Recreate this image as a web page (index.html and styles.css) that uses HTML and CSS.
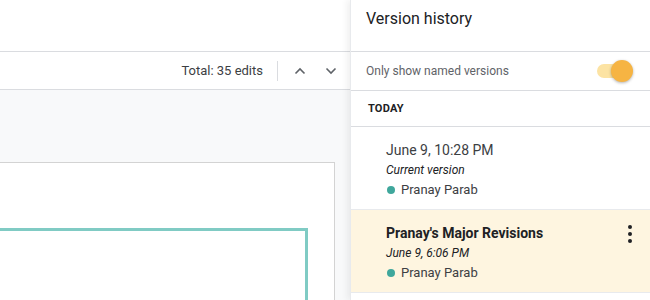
FILE: index.html
```html
<!DOCTYPE html>
<html lang="en">
<head>
    <meta charset="UTF-8">
    <title>Version history</title>
    <link rel="stylesheet" href="styles.css">
</head>
<body>
    <div class="editor">
        <div class="topbar"></div>
        <div class="toolbar">
            <span class="total">Total: 35 edits</span>
            <span class="sep"></span>
            <button class="nav" title="Previous edit">
                <svg width="12" height="8" viewBox="0 0 12 8"><path d="M1.5 6.5 6 2l4.5 4.5" fill="none" stroke="#5f6368" stroke-width="1.6"/></svg>
            </button>
            <button class="nav" title="Next edit">
                <svg width="12" height="8" viewBox="0 0 12 8"><path d="M1.5 1.5 6 6l4.5-4.5" fill="none" stroke="#5f6368" stroke-width="1.6"/></svg>
            </button>
        </div>
        <div class="canvas">
            <div class="page">
                <div class="change"></div>
            </div>
        </div>
    </div>

    <div class="panel">
        <div class="panel-title">Version history</div>
        <div class="filter">
            <span>Only show named versions</span>
            <span class="toggle"><span class="thumb"></span></span>
        </div>
        <div class="day">TODAY</div>

        <div class="version">
            <div class="v-title">June 9, 10:28 PM</div>
            <div class="v-sub">Current version</div>
            <div class="author"><span class="dot"></span>Pranay Parab</div>
        </div>

        <div class="version named">
            <div class="v-title">Pranay's Major Revisions</div>
            <div class="v-sub">June 9, 6:06 PM</div>
            <div class="author"><span class="dot"></span>Pranay Parab</div>
            <span class="more"><i></i><i></i><i></i></span>
        </div>
    </div>
</body>
</html>
```

FILE: styles.css
```css
* {
    margin: 0;
    padding: 0;
    box-sizing: border-box;
}

body {
    font-family: Roboto, Arial, sans-serif;
    display: flex;
    height: 300px;
    overflow: hidden;
    background: white;
    color: #202124;
}

.editor {
    width: 350px;
    display: flex;
    flex-direction: column;
}

.topbar {
    height: 52px;
    border-bottom: 1px solid #dadce0;
}

.toolbar {
    height: 38px;
    border-bottom: 1px solid #dadce0;
    display: flex;
    align-items: center;
    justify-content: flex-end;
    padding-right: 9px;
}

.total {
    font-size: 13px;
    color: #3c4043;
    margin-right: 14px;
}

.sep {
    width: 1px;
    height: 20px;
    background: #dadce0;
    margin-right: 12px;
}

.nav {
    border: none;
    background: none;
    width: 20px;
    height: 20px;
    display: flex;
    align-items: center;
    justify-content: center;
    margin-left: 11px;
}

.nav:first-of-type { margin-left: 0; }

.canvas {
    flex: 1;
    background: #f8f9fa;
    padding: 72px 15px 0 0;
    display: flex;
}

.page {
    flex: 1;
    margin-left: -20px;
    background: white;
    border: 1px solid #d3d3d3;
    border-bottom: none;
    padding: 65px 26px 0 0;
    display: flex;
}

.change {
    flex: 1;
    border: 3px solid #80cbc4;
    border-left: none;
    border-bottom: none;
}

.panel {
    width: 300px;
    border-left: 1px solid #e8eaed;
    box-shadow: -3px 0 6px rgba(60,64,67,0.08);
    display: flex;
    flex-direction: column;
    position: relative;
}

.panel-title {
    height: 52px;
    padding: 9px 0 0 15px;
    font-size: 16px;
    border-bottom: 1px solid #dadce0;
}

.filter {
    height: 39px;
    border-bottom: 1px solid #dadce0;
    display: flex;
    align-items: center;
    justify-content: space-between;
    padding: 0 15px;
    font-size: 12px;
    color: #5f6368;
}

.toggle {
    position: relative;
    width: 30px;
    height: 14px;
    border-radius: 7px;
    background: #fce3a3;
    margin-right: 8px;
}

.thumb {
    position: absolute;
    right: -6px;
    top: -4px;
    width: 22px;
    height: 22px;
    border-radius: 50%;
    background: #f6b443;
    box-shadow: 0 1px 3px rgba(0,0,0,0.3);
}

.day {
    height: 36px;
    border-bottom: 1px solid #dadce0;
    padding: 11px 0 0 17px;
    font-size: 11px;
    font-weight: bold;
    letter-spacing: 0.2px;
}

.version {
    position: relative;
    height: 83px;
    padding: 14px 0 0 35px;
    border-bottom: 1px solid #e8eaed;
}

.v-title {
    font-size: 14px;
    color: #3c4043;
    line-height: 18px;
}

.v-sub {
    font-size: 12px;
    font-style: italic;
    color: #202124;
    margin-top: 4px;
    line-height: 15px;
}

.author {
    display: flex;
    align-items: center;
    font-size: 13px;
    color: #3c4043;
    margin-top: 4px;
    line-height: 16px;
}

.dot {
    width: 8px;
    height: 8px;
    border-radius: 50%;
    background: #3fa79c;
    margin: 0 6px 0 1px;
}

.named {
    background: #fef5e0;
}

.named .v-title {
    font-weight: bold;
    color: #202124;
}

.more {
    position: absolute;
    right: 18px;
    top: 15px;
    display: flex;
    flex-direction: column;
    gap: 3px;
}

.more i {
    width: 4px;
    height: 4px;
    border-radius: 50%;
    background: #202124;
}
```
